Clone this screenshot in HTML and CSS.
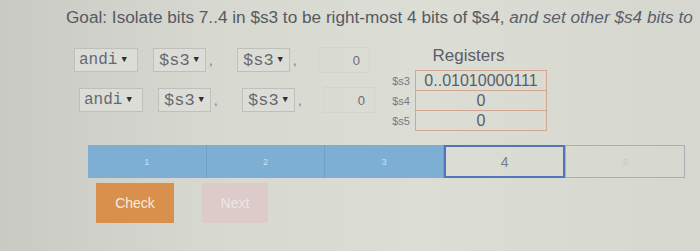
FILE: index.html
```html
<!DOCTYPE html>
<html>
<head>
<meta charset="UTF-8">
<title>Isolate bits</title>
<link rel="stylesheet" href="styles.css">
</head>
<body>
  <div class="page">
    <p class="goal">Goal: Isolate bits 7..4 in $s3 to be right-most 4 bits of $s4, <em>and set other $s4 bits to</em></p>

    <div class="workspace">
      <div class="code">
        <div class="instr">
          <span class="pick op">andi <i>&#9660;</i></span>
          <span class="pick">$s3 <i>&#9660;</i></span><span class="comma">,</span>
          <span class="pick">$s3 <i>&#9660;</i></span><span class="comma">,</span>
          <span class="imm">0</span>
        </div>
        <div class="instr second">
          <span class="pick op">andi <i>&#9660;</i></span>
          <span class="pick">$s3 <i>&#9660;</i></span><span class="comma">,</span>
          <span class="pick">$s3 <i>&#9660;</i></span><span class="comma">,</span>
          <span class="imm">0</span>
        </div>
      </div>

      <div class="registers">
        <h2>Registers</h2>
        <table>
          <tr><th>$s3</th><td>0..01010000111</td></tr>
          <tr><th>$s4</th><td>0</td></tr>
          <tr><th>$s5</th><td>0</td></tr>
        </table>
      </div>
    </div>

    <div class="progress">
      <div class="step done">1</div>
      <div class="step done">2</div>
      <div class="step done">3</div>
      <div class="step current">4</div>
      <div class="step">5</div>
    </div>

    <div class="actions">
      <button class="check">Check</button>
      <button class="next">Next</button>
    </div>
  </div>
</body>
</html>
```

FILE: styles.css
```css
/* General Styles */
body {
    margin: 0;
    height: 251px;
    overflow: hidden;
    font-family: 'Liberation Sans', Arial, sans-serif;
    color: #5a5f66;
    background: linear-gradient(90deg, #c9cac3 0%, #d7d8d0 30%, #dcddd5 60%, #d6d7cf 100%);
}

.page {
    padding: 7px 0 0 66px;
}

.goal {
    margin: 0;
    font-size: 17.2px;
    line-height: 20px;
    white-space: nowrap;
    color: #555a62;
}

.goal em {
    color: #5a5f6c;
}

/* Code + registers */
.workspace {
    display: flex;
    margin-top: 21px;
}

.code {
    display: flex;
    flex-direction: column;
    gap: 16px;
    padding: 0 0 0 8px;
    width: 316px;
}

.instr {
    display: flex;
    align-items: center;
    height: 24px;
}

.instr.second {
    padding-left: 5px;
}

.pick {
    display: inline-flex;
    align-items: center;
    box-sizing: border-box;
    width: 53px;
    height: 24px;
    padding: 0 3px 0 5px;
    border: 1px solid #bfc0b9;
    background: #dcddd6;
    font-family: 'Liberation Mono', 'Courier New', monospace;
    font-size: 17px;
    color: #666870;
}

.pick i {
    font-style: normal;
    font-size: 9px;
    margin-left: 4px;
    color: #2e2e30;
}

.pick.op {
    width: 64px;
    padding-left: 4px;
    font-size: 16px;
    margin-right: 15px;
}

.comma {
    width: 28px;
    padding-left: 3px;
    font-size: 13px;
    color: #777;
}

.imm {
    box-sizing: border-box;
    width: 52px;
    height: 26px;
    margin-left: -3px;
    padding-right: 9px;
    border: 1px solid #d3d4cc;
    text-align: right;
    font-size: 13px;
    line-height: 26px;
    color: #6a6d70;
}

.registers {
    width: 157px;
}

.registers h2 {
    margin: -3px 0 3px 0;
    font-size: 17px;
    font-weight: normal;
    text-align: center;
    color: #5a5e66;
    line-height: 22px;
}

.registers table {
    border-collapse: collapse;
}

.registers th {
    width: 20px;
    padding: 0 5px 0 0;
    font-size: 11px;
    font-weight: normal;
    text-align: right;
    color: #777b80;
}

.registers td {
    width: 130px;
    height: 19px;
    padding: 0;
    border: 1px solid #d3a690;
    text-align: center;
    font-size: 16px;
    color: #5a5e66;
}

/* Progress */
.progress {
    display: flex;
    margin: 14px 0 0 22px;
    width: 597px;
    height: 33px;
}

.step {
    flex: 1;
    box-sizing: border-box;
    display: flex;
    align-items: center;
    justify-content: center;
    font-size: 9px;
    color: #c8ccc6;
    border: 1px solid #a9afb6;
}

.step.done {
    background: #7cafd3;
    color: #cfe0ea;
    border: none;
    border-right: 1px solid #6ea1c4;
}

.step.current {
    border: 2px solid #5374b8;
    font-size: 14px;
    color: #7a7e86;
}

/* Buttons */
.actions {
    display: flex;
    gap: 28px;
    margin: 5px 0 0 30px;
}

button {
    border: none;
    height: 40px;
    font-family: 'Liberation Sans', Arial, sans-serif;
    font-size: 14px;
    color: #f4ecdf;
}

.check {
    width: 78px;
    background: #d8904c;
}

.next {
    width: 66px;
    background: #dccbc9;
    color: #efe6e4;
}
```
